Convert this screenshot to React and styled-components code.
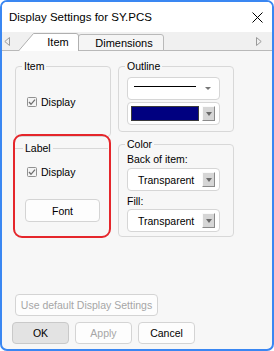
import styled, { createGlobalStyle } from 'styled-components'

const GlobalStyle = createGlobalStyle`
  html, body {
    margin: 0;
    padding: 0;
    background: #fff;
  }
  body {
    font-family: "Liberation Sans", Arial, sans-serif;
    color: #000;
  }
`

const Window = styled.div`
  width: 274px;
  height: 351px;
  box-sizing: border-box;
  border: 2px solid #3a87f2;
  border-radius: 7px;
  overflow: hidden;
  display: flex;
  flex-direction: column;
  background: #f7f7f7;
`

const TitleBar = styled.div`
  height: 30px;
  flex: none;
  background: #fff;
  display: flex;
  align-items: center;
  justify-content: space-between;
  padding: 0 9px 0 7px;
  font-size: 11.5px;
`

const TabStrip = styled.div`
  height: 19px;
  flex: none;
  box-sizing: border-box;
  background: #f0f0f0;
  border-bottom: 1px solid #b9b9b9;
  display: flex;
  align-items: flex-end;
  padding: 0 10px 0 2px;
`

const Arrow = styled.svg`
  width: 6px;
  height: 9px;
  margin-bottom: 4px;
  flex: none;
`

const Tabs = styled.div`
  display: flex;
  align-items: flex-end;
  margin: 0 auto -1px 8px;
`

const ActiveTab = styled.div`
  position: relative;
  width: 61px;
  height: 18px;
  box-sizing: border-box;
  padding-left: 19px;
  display: flex;
  align-items: center;
  justify-content: center;
  font-size: 11px;

  svg {
    position: absolute;
    inset: 0;
  }
  span {
    position: relative;
  }
`

const Tab = styled.div`
  width: 86px;
  height: 17px;
  box-sizing: border-box;
  margin-left: -1px;
  padding-left: 6px;
  border: 1px solid #b9b9b9;
  border-radius: 3px 3px 0 0;
  background: #f5f5f5;
  display: flex;
  align-items: center;
  justify-content: center;
  font-size: 11px;
`

const Page = styled.div`
  flex: 1;
  display: flex;
  align-items: flex-start;
  gap: 7px;
  padding: 9px 0 0 13px;
`

const Column = styled.div`
  width: ${p => p.$width}px;
  display: flex;
  flex-direction: column;
`

const Group = styled.fieldset`
  margin: ${p => p.$top || 0}px 0 0;
  height: ${p => p.$height}px;
  box-sizing: border-box;
  min-width: 0;
  border: 1px solid #d8d8d8;
  border-radius: 4px;
  padding: 0 0 0 ${p => p.$pad}px;
  display: flex;
  flex-direction: column;
  align-items: flex-start;
`

const Legend = styled.legend`
  font-size: 10.5px;
  line-height: 12px;
  padding: 0 2px;
  margin-left: ${p => p.$shift}px;
`

const Highlight = styled.div`
  width: 98px;
  height: 104px;
  box-sizing: border-box;
  margin: -3px 0 0 -2px;
  padding: 6px 1px 0 0;
  border: 2px solid #e5262b;
  border-radius: 9px;
`

const LabelGroup = styled.fieldset`
  margin: 0;
  min-width: 0;
  border: none;
  border-top: 1px solid #d8d8d8;
  padding: 0 0 0 12px;
  display: flex;
  flex-direction: column;
  align-items: flex-start;
`

const CheckRow = styled.label`
  display: flex;
  align-items: center;
  gap: 4px;
  margin-top: ${p => p.$top}px;
  font-size: 10.5px;
  line-height: 12px;
`

const Caption = styled.div`
  font-size: 10.5px;
  line-height: 13px;
  margin-top: ${p => p.$top}px;
`

const Combo = styled.div`
  width: 93px;
  height: 23px;
  flex: none;
  box-sizing: border-box;
  margin-top: ${p => p.$top}px;
  padding: 0 4px 0 ${p => p.$padLeft}px;
  background: #fff;
  border: 1px solid #d6d6d6;
  border-radius: 4px;
  display: flex;
  align-items: center;
  font-size: 10.5px;
`

const LineSample = styled.div`
  width: 62px;
  height: 1px;
  background: #000;
  margin-bottom: 4px;
`

const SmallCaret = styled.div`
  margin: 0 4px 0 auto;
  border-left: 3px solid transparent;
  border-right: 3px solid transparent;
  border-top: 3px solid #777;
`

const Swatch = styled.div`
  flex: 1;
  height: 15px;
  box-sizing: border-box;
  background: ${p => p.$color};
  border: 1px solid #3a3a3a;
`

const ComboText = styled.span`
  flex: 1;
`

const DropButton = styled.div`
  width: 13px;
  height: 15px;
  flex: none;
  box-sizing: border-box;
  margin-left: 3px;
  background: #d6d6d6;
  border: 1px solid;
  border-color: #fafafa #8a8a8a #8a8a8a #fafafa;
  display: flex;
  align-items: center;
  justify-content: center;

  &::after {
    content: "";
    border-left: 3px solid transparent;
    border-right: 3px solid transparent;
    border-top: 4px solid #6a6a6a;
  }
`

const Footer = styled.div`
  display: flex;
  flex-direction: column;
  align-items: flex-start;
  gap: 6px;
  padding: 0 0 5px 10px;
`

const Row = styled.div`
  display: flex;
  gap: 6px;
`

const Button = styled.button`
  width: ${p => p.$width || 57}px;
  height: ${p => p.$height || 22}px;
  margin: ${p => p.$margin || 0};
  padding: 0;
  box-sizing: border-box;
  font-family: inherit;
  font-size: 10.5px;
  color: #000;
  background: ${p => (p.$primary ? '#e3e3e3' : '#fdfdfd')};
  border: 1px solid ${p => (p.$primary ? '#c9c9c9' : '#d4d4d4')};
  border-radius: 4px;

  &:disabled {
    color: #a6a6a6;
  }
`

const CheckBox = () => (
  <svg width="10" height="10" viewBox="0 0 10 10">
    <rect x="0.5" y="0.5" width="9" height="9" rx="1" fill="#f4f4f4" stroke="#919191" />
    <polyline points="2,5 4,7.3 8,2.6" fill="none" stroke="#707070" strokeWidth="1.3" />
  </svg>
)

const App = () => {
  return (
    <>
      <GlobalStyle />
      <Window>
        <TitleBar>
          <span>Display Settings for SY.PCS</span>
          <svg width="11" height="11" viewBox="0 0 11 11">
            <path d="M0.5 0.5 L10.5 10.5 M10.5 0.5 L0.5 10.5" stroke="#000" strokeWidth="1" />
          </svg>
        </TitleBar>

        <TabStrip>
          <Arrow viewBox="0 0 6 9">
            <path d="M5.5 0.5 L0.8 4.5 L5.5 8.5 Z" fill="#f0f0f0" stroke="#9a9a9a" />
          </Arrow>
          <Tabs>
            <ActiveTab>
              <svg width="61" height="18" viewBox="0 0 61 18">
                <path d="M0.5 18 L15.5 0.5 H58 Q60.5 0.5 60.5 3 V18" fill="#fff" stroke="#b0b0b0" />
              </svg>
              <span>Item</span>
            </ActiveTab>
            <Tab>Dimensions</Tab>
          </Tabs>
          <Arrow viewBox="0 0 6 9">
            <path d="M0.5 0.5 L5.2 4.5 L0.5 8.5 Z" fill="#f0f0f0" stroke="#9a9a9a" />
          </Arrow>
        </TabStrip>

        <Page>
          <Column $width={96}>
            <Group $height={77} $pad={11}>
              <Legend $shift={-5}>Item</Legend>
              <CheckRow $top={24}>
                <CheckBox />
                Display
              </CheckRow>
            </Group>

            <Highlight>
              <LabelGroup>
                <Legend $shift={-4}>Label</Legend>
                <CheckRow $top={12}>
                  <CheckBox />
                  Display
                </CheckRow>
                <Button $width={75} $height={23} $margin="21px 0 0 -2px">Font</Button>
              </LabelGroup>
            </Highlight>
          </Column>

          <Column $width={116}>
            <Group $height={72} $pad={8}>
              <Legend $shift={-2}>Outline</Legend>
              <Combo $top={5} $padLeft={6}>
                <LineSample />
                <SmallCaret />
              </Combo>
              <Combo $top={2} $padLeft={3}>
                <Swatch $color="#000080" />
                <DropButton />
              </Combo>
            </Group>

            <Group $top={6} $height={99} $pad={8}>
              <Legend $shift={-2}>Color</Legend>
              <Caption $top={3}>Back of item:</Caption>
              <Combo $top={2} $padLeft={10}>
                <ComboText>Transparent</ComboText>
                <DropButton />
              </Combo>
              <Caption $top={4}>Fill:</Caption>
              <Combo $top={1} $padLeft={10}>
                <ComboText>Transparent</ComboText>
                <DropButton />
              </Combo>
            </Group>
          </Column>
        </Page>

        <Footer>
          <Button $width={143} $margin="0 0 0 3px" disabled>Use default Display Settings</Button>
          <Row>
            <Button $primary>OK</Button>
            <Button disabled>Apply</Button>
            <Button>Cancel</Button>
          </Row>
        </Footer>
      </Window>
    </>
  )
}

export default App
